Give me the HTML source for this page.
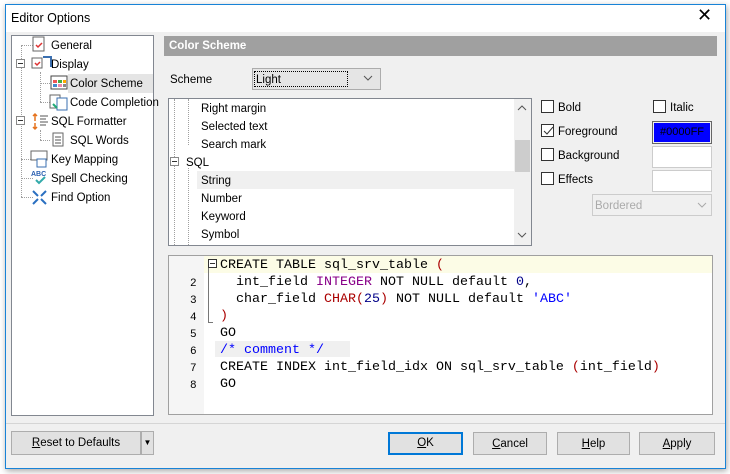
<!DOCTYPE html>
<html><head><meta charset="utf-8"><style>
*{margin:0;padding:0;box-sizing:border-box}
body{width:730px;height:474px;background:#fff;font-family:"Liberation Sans",sans-serif;font-size:11.5px;color:#000;position:relative;overflow:hidden}
.a{position:absolute;white-space:nowrap}
.t{margin-top:2px}
.win{position:absolute;left:5px;top:4px;width:721px;height:465px;background:#f0f0f0;border:1px solid #1883d7;box-shadow:1px 2px 6px rgba(0,0,0,.35)}
.btn{position:absolute;background:#e1e1e1;border:1px solid #adadad;text-align:center;line-height:22px}
.cb{position:absolute;width:13px;height:13px;border:1px solid #333;background:#fff}
.code{font-family:"Liberation Mono",monospace;font-size:13.33px}
.dot{position:absolute;border-color:#a0a0a0;border-style:dotted;border-width:0}
.mb{position:absolute;width:9px;height:9px;border:1px solid #888;background:#fff}
.mb:after{content:"";position:absolute;left:1px;top:3px;width:5px;height:1px;background:#333}
</style></head><body>
<div class="win"></div>
<div class="a" style="left:6px;top:5px;width:719px;height:27px;background:#fff"></div>
<div class="a" style="left:11px;top:11px;font-size:12.5px">Editor Options</div>
<div class="a" style="left:697px;top:5px;font-size:18px;font-weight:300">✕</div>

<div class="a" style="left:11px;top:35px;width:143px;height:381px;background:#fff;border:1px solid #828790"></div>
<div class="dot" style="left:21px;top:45px;height:152px;border-left-width:1px"></div>
<div class="dot" style="left:21px;top:45px;width:12px;border-top-width:1px"></div>
<div class="dot" style="left:21px;top:159px;width:12px;border-top-width:1px"></div>
<div class="dot" style="left:21px;top:178px;width:12px;border-top-width:1px"></div>
<div class="dot" style="left:21px;top:197px;width:12px;border-top-width:1px"></div>
<div class="dot" style="left:40px;top:72px;height:30px;border-left-width:1px"></div>
<div class="dot" style="left:40px;top:83px;width:10px;border-top-width:1px"></div>
<div class="dot" style="left:40px;top:102px;width:10px;border-top-width:1px"></div>
<div class="dot" style="left:40px;top:130px;height:10px;border-left-width:1px"></div>
<div class="dot" style="left:40px;top:140px;width:10px;border-top-width:1px"></div>
<div class="mb" style="left:16px;top:59px"></div>
<div class="mb" style="left:16px;top:116px"></div>
<svg class="a" style="left:0;top:0" width="160" height="210">
<g fill="#fff" stroke="#666"><rect x="33" y="37" width="11" height="14"/><rect x="32" y="58" width="10" height="10"/><rect x="51" y="76" width="16" height="13" fill="#fff" stroke="#444"/><rect x="50" y="95" width="10" height="13"/><rect x="53" y="133" width="10" height="13"/><rect x="31" y="151" width="16" height="9"/><rect x="37" y="159" width="9" height="8" stroke="#3a6fb0"/></g>
<path d="M36 45l2 2 4-4M35 63l2 2 3-3" stroke="#d33" fill="none" stroke-width="1.5"/>
<path d="M43 57h8v10" stroke="#3a6fb0" fill="none" stroke-width="2"/>
<g><rect x="53" y="80" width="4" height="3" fill="#e55"/><rect x="58" y="80" width="4" height="3" fill="#4a4"/><rect x="63" y="80" width="3" height="3" fill="#fa0"/><rect x="53" y="84" width="4" height="3" fill="#48c"/><rect x="58" y="84" width="4" height="3" fill="#e8a"/><rect x="63" y="84" width="3" height="3" fill="#888"/></g>
<rect x="57" y="98" width="10" height="12" fill="#fff" stroke="#3a6fb0"/><path d="M53 104l4 4" stroke="#2a7" stroke-width="2"/>
<path d="M35 114v7M33 116l2-2 2 2M35 123v6M33 127l2 2 2-2" stroke="#e6731e" fill="none" stroke-width="1.5"/>
<path d="M40 116h8M40 119h6M40 122h8M40 125h6M55 137h6M55 140h6M55 143h6" stroke="#555"/>
<text x="31" y="176" font-size="7" fill="#2a5fb0" font-family="Liberation Sans" font-weight="bold">ABC</text>
<path d="M36 180l3 3 6-6" stroke="#3aa" fill="none" stroke-width="2"/>
<path d="M33 191l5 5M46 191l-5 5M33 204l5-5M46 204l-5-5" stroke="#2a6fc0" stroke-width="2"/>
</svg>
<div class="a t" style="left:51px;top:38px">General</div>
<div class="a t" style="left:51px;top:57px">Display</div>
<div class="a" style="left:68px;top:74px;width:85px;height:19px;background:#e5e5e5"></div>
<div class="a t" style="left:70px;top:76px">Color Scheme</div>
<div class="a t" style="left:70px;top:95px">Code Completion</div>
<div class="a t" style="left:51px;top:114px">SQL Formatter</div>
<div class="a t" style="left:70px;top:133px">SQL Words</div>
<div class="a t" style="left:51px;top:152px">Key Mapping</div>
<div class="a t" style="left:51px;top:171px">Spell Checking</div>
<div class="a t" style="left:51px;top:190px">Find Option</div>

<div class="a" style="left:164px;top:36px;width:553px;height:20px;background:#a0a0a0"></div>
<div class="a" style="left:169px;top:40px;color:#fff;font-weight:bold">Color Scheme</div>

<div class="a t" style="left:170px;top:72px">Scheme</div>
<div class="a" style="left:252px;top:68px;width:129px;height:22px;background:#e5e5e5;border:1px solid #acacac"></div>
<div class="a" style="left:254px;top:71px;width:94px;height:16px;border:1px dotted #000"></div>
<div class="a t" style="left:256px;top:72px">Light</div>
<svg class="a" style="left:363px;top:74px" width="10" height="8"><path d="M1 2l4 4 4-4" stroke="#555" fill="none"/></svg>

<div class="a" style="left:168px;top:98px;width:364px;height:148px;background:#fff;border:1px solid #828790"></div>
<div class="a" style="left:514px;top:99px;width:17px;height:146px;background:#f0f0f0"></div>
<div class="a" style="left:515px;top:140px;width:15px;height:32px;background:#cdcdcd"></div>
<svg class="a" style="left:517px;top:231px" width="10" height="8"><path d="M1 2l4 4 4-4" stroke="#555" fill="none"/></svg>
<svg class="a" style="left:517px;top:104px" width="10" height="8"><path d="M1 6l4-4 4 4" stroke="#555" fill="none"/></svg>
<div class="a" style="left:197px;top:171px;width:317px;height:18px;background:#f0f0f0"></div>
<div class="dot" style="left:174px;top:99px;height:146px;border-left-width:1px"></div>
<div class="dot" style="left:188px;top:99px;height:46px;border-left-width:1px"></div>
<div class="dot" style="left:188px;top:168px;height:77px;border-left-width:1px"></div>
<div class="mb" style="left:170px;top:157px"></div>
<div class="a t" style="left:201px;top:101px">Right margin</div>
<div class="a t" style="left:201px;top:119px">Selected text</div>
<div class="a t" style="left:201px;top:137px">Search mark</div>
<div class="a t" style="left:186px;top:155px">SQL</div>
<div class="a t" style="left:201px;top:173px">String</div>
<div class="a t" style="left:201px;top:191px">Number</div>
<div class="a t" style="left:201px;top:209px">Keyword</div>
<div class="a t" style="left:201px;top:227px">Symbol</div>

<div class="cb" style="left:541px;top:100px"></div><div class="a t" style="left:558px;top:100px">Bold</div>
<div class="cb" style="left:653px;top:100px"></div><div class="a t" style="left:670px;top:100px">Italic</div>
<div class="cb" style="left:541px;top:124px"></div><svg class="a" style="left:542px;top:125px" width="12" height="12"><path d="M2 6l3 3 6-7" stroke="#333" fill="none"/></svg><div class="a t" style="left:558px;top:124px">Foreground</div>
<div class="a" style="left:652px;top:121px;width:60px;height:23px;border:1px solid #666;padding:1px"><div style="background:#0000ff;height:100%;color:#000;font-size:11px;line-height:18px;padding-left:6px">#0000FF</div></div>
<div class="cb" style="left:541px;top:148px"></div><div class="a t" style="left:558px;top:148px">Background</div>
<div class="a" style="left:652px;top:146px;width:60px;height:22px;border:1px solid #ccc;background:#fff"></div>
<div class="cb" style="left:541px;top:172px"></div><div class="a t" style="left:558px;top:172px">Effects</div>
<div class="a" style="left:652px;top:170px;width:60px;height:22px;border:1px solid #ccc;background:#fff"></div>
<div class="a" style="left:592px;top:194px;width:120px;height:22px;border:1px solid #ccc;background:#f0f0f0"></div>
<div class="a t" style="left:595px;top:198px;color:#aaa">Bordered</div>
<svg class="a" style="left:697px;top:201px" width="10" height="8"><path d="M1 2l4 4 4-4" stroke="#aaa" fill="none"/></svg>

<div class="a" style="left:168px;top:255px;width:545px;height:160px;background:#fff;border:1px solid #a0a0a0"></div>
<div class="a" style="left:169px;top:256px;width:35px;height:158px;background:#f5f5f5"></div>
<div class="a" style="left:204px;top:256px;width:508px;height:17px;background:#fcfce6"></div>
<div class="a" style="left:215px;top:341px;width:135px;height:16px;background:#f0f0f0"></div>
<div class="a" style="left:208px;top:266px;width:1px;height:57px;background:#777"></div>
<div class="a" style="left:208px;top:322px;width:5px;height:1px;background:#777"></div>
<div class="mb" style="left:208px;top:259px;border-color:#333"></div>
<div class="a code" style="left:190px;top:276px;font-size:11px;line-height:17px">2<br>3<br>4<br>5<br>6<br>7<br>8</div>
<div class="a code" style="left:220px;top:257px;line-height:17px"><span>CREATE TABLE sql_srv_table </span><span style="color:#a00">(</span><br>
&nbsp;&nbsp;int_field <span style="color:#808">INTEGER</span> NOT NULL default <span style="color:#008">0</span>,<br>
&nbsp;&nbsp;char_field <span style="color:#a00">CHAR(</span><span style="color:#008">25</span><span style="color:#a00">)</span> NOT NULL default <span style="color:#00f">'ABC'</span><br>
<span style="color:#a00">)</span><br>GO<br><span style="color:#00f">/* comment */</span><br>CREATE INDEX int_field_idx ON sql_srv_table <span style="color:#a00">(</span>int_field<span style="color:#a00">)</span><br>GO</div>

<div class="a" style="left:6px;top:423px;width:719px;height:1px;background:#d5d5d5"></div>
<div class="btn" style="left:11px;top:431px;width:130px;height:24px"><u>R</u>eset to Defaults</div>
<div class="btn" style="left:141px;top:431px;width:13px;height:24px;font-size:8px">▼</div>
<div class="btn" style="left:388px;top:432px;width:75px;height:23px;border:2px solid #0078d7;line-height:19px"><u>O</u>K</div>
<div class="btn" style="left:473px;top:432px;width:74px;height:23px"><u>C</u>ancel</div>
<div class="btn" style="left:557px;top:432px;width:73px;height:23px"><u>H</u>elp</div>
<div class="btn" style="left:639px;top:432px;width:76px;height:23px"><u>A</u>pply</div>
</body></html>
